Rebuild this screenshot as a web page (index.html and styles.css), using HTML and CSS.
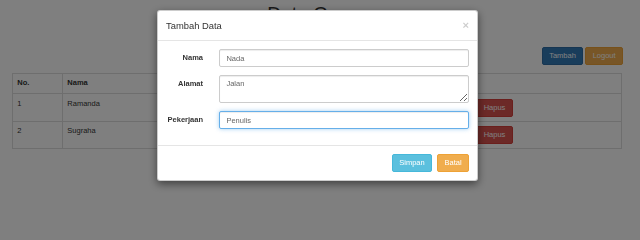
FILE: index.html
```html
<!DOCTYPE html>
<html lang="id">
<head>
<meta charset="utf-8">
<title>Data Orang</title>
<link rel="stylesheet" href="styles.css">
</head>
<body>
<div class="container">
  <h1 class="page-title">Data Orang</h1>
  <div class="toolbar">
    <button class="btn btn-primary">Tambah</button>
    <button class="btn btn-warning">Logout</button>
  </div>
  <table class="data-table">
    <colgroup>
      <col class="c-no"><col class="c-nama"><col class="c-aksi">
    </colgroup>
    <thead>
      <tr><th>No.</th><th>Nama</th><th></th></tr>
    </thead>
    <tbody>
      <tr>
        <td>1</td><td>Ramanda</td>
        <td><div class="actions"><button class="btn btn-danger">Hapus</button></div></td>
      </tr>
      <tr>
        <td>2</td><td>Sugraha</td>
        <td><div class="actions"><button class="btn btn-danger">Hapus</button></div></td>
      </tr>
    </tbody>
  </table>
</div>

<div class="backdrop">
  <div class="modal">
    <div class="modal-header">
      <h4 class="modal-title">Tambah Data</h4>
      <span class="close">&times;</span>
    </div>
    <div class="modal-body">
      <div class="form-group">
        <label class="control-label">Nama</label>
        <input class="form-control" type="text" value="Nada">
      </div>
      <div class="form-group">
        <label class="control-label">Alamat</label>
        <textarea class="form-control area">Jalan</textarea>
      </div>
      <div class="form-group">
        <label class="control-label">Pekerjaan</label>
        <input class="form-control focused" type="text" value="Penulis">
      </div>
    </div>
    <div class="modal-footer">
      <button class="btn btn-info">Simpan</button>
      <button class="btn btn-warning">Batal</button>
    </div>
  </div>
</div>
</body>
</html>
```

FILE: styles.css
```css
* { box-sizing: border-box; }

body {
  margin: 0;
  font-family: "Liberation Sans", Arial, sans-serif;
  font-size: 7.5px;
  line-height: 10.7px;
  color: #333;
  background: #fff;
}

.container {
  padding: 0 18px 0 12px;
}

.page-title {
  margin: 3.5px 0 0;
  font-size: 19.3px;
  line-height: 21.2px;
  font-weight: 500;
  text-align: center;
}

.toolbar {
  display: flex;
  justify-content: flex-end;
  gap: 2px;
  margin-top: 22.3px;
  margin-right: -1px;
}

.btn {
  display: inline-block;
  height: 18px;
  padding: 0 6.4px;
  font-family: inherit;
  font-size: 7.5px;
  line-height: 16px;
  border: 1px solid transparent;
  border-radius: 2px;
  color: #fff;
  white-space: nowrap;
}

.btn-primary { background: #337ab7; border-color: #2e6da4; }
.btn-warning { background: #f0ad4e; border-color: #eea236; }
.btn-danger  { background: #d9534f; border-color: #d43f3a; }
.btn-info    { background: #5bc0de; border-color: #46b8da; }

.data-table {
  width: 100%;
  margin-top: 8px;
  border-collapse: collapse;
  table-layout: fixed;
  border: 1px solid #ddd;
}

.c-no { width: 50px; }
.c-nama { width: 408px; }

.data-table th,
.data-table td {
  padding: 4.3px;
  border: 1px solid #ddd;
  text-align: left;
  vertical-align: top;
  line-height: 10.7px;
  height: 10.7px;
}

.data-table th {
  font-weight: bold;
  vertical-align: bottom;
}

.actions {
  display: flex;
  gap: 2px;
  padding-left: 1px;
}

/* modal */
.backdrop {
  position: fixed;
  inset: 0;
  background: rgba(0, 0, 0, 0.5);
}

.modal {
  width: 321px;
  margin: 10px 0 0 157px;
  background: #fff;
  border: 1px solid rgba(0, 0, 0, 0.2);
  border-radius: 3px;
  box-shadow: 0 3px 8px rgba(0, 0, 0, 0.5);
}

.modal-header {
  display: flex;
  justify-content: space-between;
  align-items: flex-start;
  padding: 8px;
  border-bottom: 1px solid #e5e5e5;
}

.modal-title {
  margin: 0;
  font-size: 9.4px;
  line-height: 13px;
  font-weight: 500;
}

.close {
  font-size: 11.2px;
  line-height: 11.2px;
  font-weight: bold;
  color: #000;
  opacity: 0.2;
  margin-top: 1px;
}

.modal-body {
  padding: 8px;
}

.form-group {
  display: grid;
  grid-template-columns: 37px 250px;
  column-gap: 16px;
  margin-bottom: 8px;
}

.control-label {
  padding-top: 3.75px;
  font-weight: bold;
  text-align: right;
  line-height: 10.7px;
}

.form-control {
  display: block;
  width: 250px;
  height: 18px;
  padding: 0 6.4px;
  font-family: inherit;
  font-size: 7.5px;
  color: #666;
  background: #fff;
  border: 1px solid #ccc;
  border-radius: 2px;
  box-shadow: inset 0 1px 1px rgba(0, 0, 0, 0.075);
  outline: none;
}

.area {
  height: 28px;
  padding: 3.2px 6.4px;
  line-height: 10.7px;
  resize: vertical;
}

.focused {
  border-color: #66afe9;
  box-shadow: inset 0 1px 1px rgba(0, 0, 0, 0.075), 0 0 4px rgba(102, 175, 233, 0.6);
}

.modal-footer {
  display: flex;
  justify-content: flex-end;
  gap: 5px;
  padding: 8px;
  border-top: 1px solid #e5e5e5;
}
```
